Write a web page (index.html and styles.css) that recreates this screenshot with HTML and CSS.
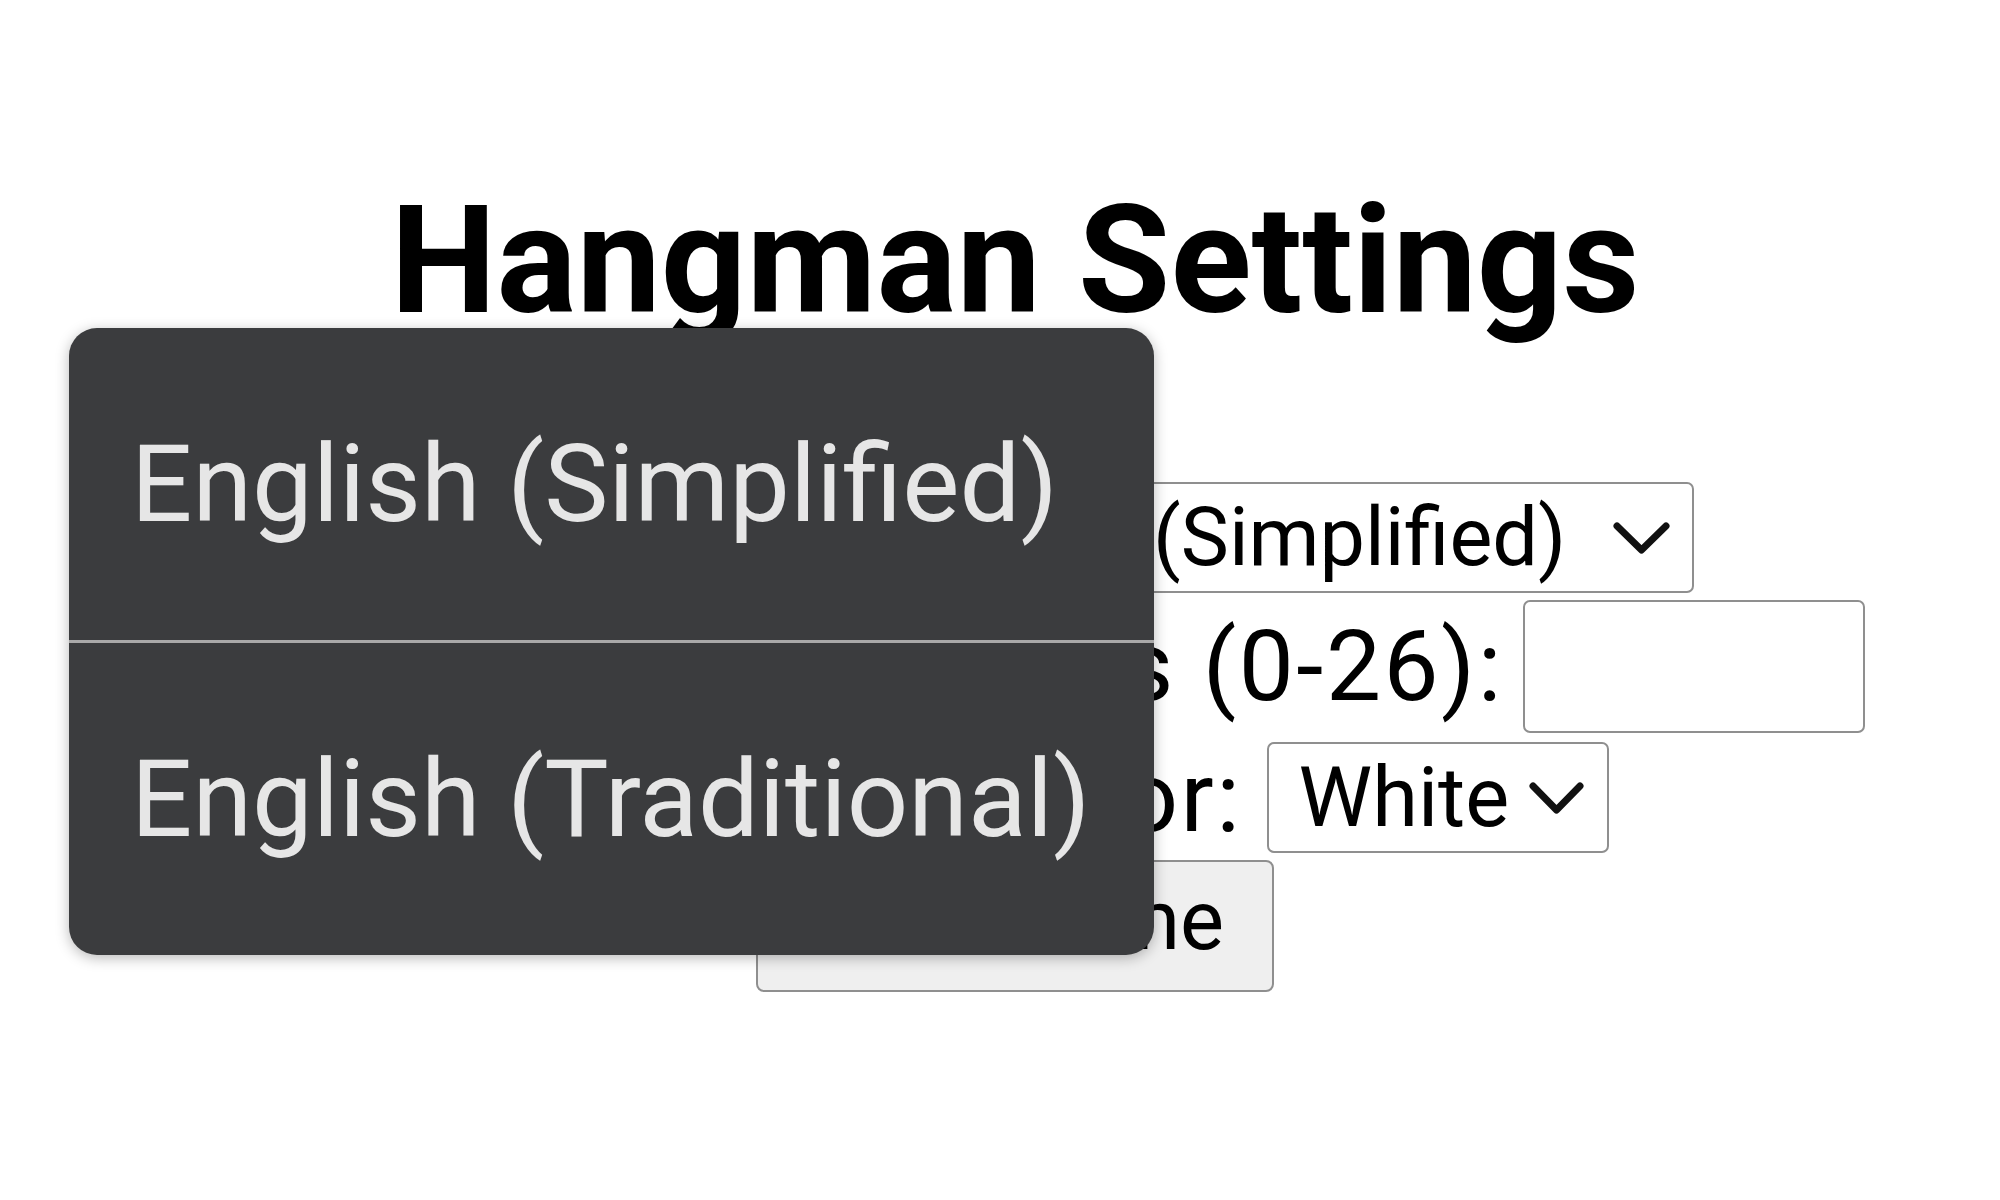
FILE: index.html
```html
<!DOCTYPE html>
<html lang="en">
  <head>
    <meta charset="UTF-8" />
    <title>Hangman Settings</title>
    <link rel="stylesheet" href="styles.css">
  </head>
  <body>
    <div class="page">
      <h1>Hangman Settings</h1>
      <form id="settingsForm" class="settings">
        <div class="row row-lang">
          <label for="language">Language:</label>
          <div class="select-box select-lang">
            <select id="language">
              <option>English (Simplified)</option>
              <option>English (Traditional)</option>
            </select>
            <svg class="chevron" width="57" height="34" viewBox="0 0 57 34">
              <polyline points="4,5 28.5,29 53,5" />
            </svg>
          </div>
        </div>

        <div class="row row-guesses">
          <label for="guesses">Max Incorrect Guesses (0-26):</label>
          <input type="text" id="guesses" />
        </div>

        <div class="row row-color">
          <label for="color">Background Color:</label>
          <div class="select-box select-color">
            <select id="color">
              <option>White</option>
              <option>Black</option>
            </select>
            <svg class="chevron" width="55" height="34" viewBox="0 0 55 34">
              <polyline points="4,5 27.5,29 51,5" />
            </svg>
          </div>
        </div>

        <div class="row row-button">
          <button type="submit">Start Game</button>
        </div>
      </form>

      <!-- open dropdown of the language select -->
      <ul class="dropdown">
        <li>English (Simplified)</li>
        <li>English (Traditional)</li>
      </ul>
    </div>
  </body>
</html>
```

FILE: styles.css
```css
body {
  margin: 0;
  font-family: Roboto, "Liberation Sans", sans-serif;
  color: #000;
  background: #fff;
}
.page {
  position: relative;
  padding-left: 30px;
  height: 1200px;
  overflow: hidden;
}
h1 {
  margin: 172px 0 0;
  font-size: 150px;
  line-height: 178px;
  font-weight: 700;
  text-align: center;
}
.settings {
  margin-top: 132px;
}
.row {
  display: flex;
  justify-content: center;
  align-items: center;
  font-size: 98px;
}
.row label {
  white-space: nowrap;
  letter-spacing: 2.5px;
}
.row-lang {
  height: 111px;
  margin-bottom: 7px;
}
.row-lang label {
  margin: 0 26px 0 5px;
}
.row-guesses {
  height: 133px;
  margin-bottom: 9px;
}
.row-guesses label {
  margin: 0 19px 0 -43px;
}
.row-color {
  height: 111px;
  margin-bottom: 7px;
}
.row-color label {
  margin: 0 24px 0 -23px;
}
.row-button {
  height: 132px;
}
.select-box {
  display: flex;
  align-items: center;
  box-sizing: border-box;
  height: 111px;
  border: 2px solid #8f8f8f;
  border-radius: 7px;
  background: #fff;
}
.select-box select {
  flex: 1;
  min-width: 0;
  appearance: none;
  -webkit-appearance: none;
  border: none;
  background: transparent;
  font-family: Roboto, "Liberation Sans", sans-serif;
  font-size: 81px;
  color: #000;
  padding: 0;
  outline: none;
}
.select-lang {
  width: 851px;
  padding: 0 22px 0 26px;
}
.select-color {
  width: 342px;
  padding: 0 23px 0 30px;
}
.select-color select {
  font-size: 83px;
}
.chevron polyline {
  fill: none;
  stroke: #111;
  stroke-width: 7;
  stroke-linecap: round;
  stroke-linejoin: round;
}
.row input {
  box-sizing: border-box;
  width: 342px;
  height: 133px;
  border: 2px solid #8f8f8f;
  border-radius: 7px;
  font-size: 81px;
}
button {
  box-sizing: border-box;
  width: 518px;
  height: 132px;
  font-family: Roboto, "Liberation Sans", sans-serif;
  font-size: 83px;
  color: #000;
  background: #efefef;
  border: 2px solid #8f8f8f;
  border-radius: 8px;
  padding: 0 0 12px;
}
.dropdown {
  position: absolute;
  left: 69px;
  top: 328px;
  width: 1085px;
  margin: 0;
  padding: 0;
  list-style: none;
  background: #3b3c3e;
  border-radius: 28px;
  box-shadow: 0 3px 14px rgba(0, 0, 0, 0.28);
  overflow: hidden;
}
.dropdown li {
  display: flex;
  align-items: center;
  height: 312px;
  padding-left: 62px;
  font-size: 108px;
  color: #e6e6e6;
}
.dropdown li + li {
  border-top: 3px solid #a9a9a9;
}
```
